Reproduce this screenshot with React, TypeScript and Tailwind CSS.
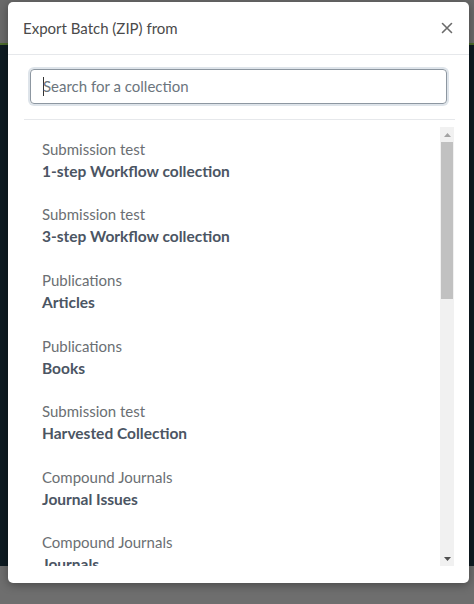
import React from 'react';

const collections = [
  { parent: 'Submission test', name: '1-step Workflow collection' },
  { parent: 'Submission test', name: '3-step Workflow collection' },
  { parent: 'Publications', name: 'Articles' },
  { parent: 'Publications', name: 'Books' },
  { parent: 'Submission test', name: 'Harvested Collection' },
  { parent: 'Compound Journals', name: 'Journal Issues' },
  { parent: 'Compound Journals', name: 'Journals' },
];

const App: React.FC = () => {
  return (
    <div className="relative w-[474px] h-[604px] overflow-hidden font-['Lato','Liberation_Sans',sans-serif]">
      {/* dimmed page behind the dialog */}
      <div className="flex flex-col h-full">
        <div className="h-[43px] bg-[#6a6a6a]" />
        <div className="h-[2px] bg-[#4d6b2c]" />
        <div className="flex-1 bg-[#0e1b22]" />
        <div className="h-[38px] bg-[#6e6e6e]" />
      </div>

      <div className="absolute left-[8px] top-[2px] w-[461px] h-[581px] bg-white rounded-[5px] shadow-[0_2px_10px_rgba(0,0,0,0.35)] flex flex-col">
        <div className="h-[53px] flex items-center justify-between pl-[15px] pr-[16px] border-b border-[#e6e8eb]">
          <h2 className="text-[15px] text-[#4a4a4a]">Export Batch (ZIP) from</h2>
          <button className="text-[#6b6b6b]">
            <svg width="12" height="12" viewBox="0 0 12 12" stroke="currentColor" strokeWidth="1.6" strokeLinecap="round">
              <path d="M1.5 1.5l9 9M10.5 1.5l-9 9" />
            </svg>
          </button>
        </div>

        <div className="flex-1 flex flex-col pl-[16px] pr-[14px] pt-[14px] pb-[17px] min-h-0">
          <div className="pl-[6px] pr-[8px]">
            <div className="h-[35px] rounded-[4px] border border-[#8d97a1] shadow-[0_0_0_2px_rgba(200,210,220,0.6)] flex items-center pl-[12px]">
              <span className="w-px h-[19px] bg-[#333] -mr-px" />
              <span className="text-[15px] text-[#6c757d]">Search for a collection</span>
            </div>
          </div>

          <div className="mt-[15px] border-t border-[#e6e8eb]" />

          <div className="mt-[7px] flex-1 flex min-h-0">
            <div className="flex-1 overflow-hidden">
              {collections.map((c) => (
                <div key={c.name} className="pl-[18px] py-[10.8px] text-[15px] leading-[22px]">
                  <div className="text-[#6b6f73]">{c.parent}</div>
                  <div className="font-bold text-[15.5px] text-[#4b5563]">{c.name}</div>
                </div>
              ))}
            </div>
            <div className="w-[14px] mr-[1px] bg-[#f1f1f1] flex flex-col">
              <div className="h-[15px] flex items-center justify-center">
                <svg width="7" height="4" viewBox="0 0 7 4"><path d="M0 4L3.5 0 7 4z" fill="#a3a3a3" /></svg>
              </div>
              <div className="h-[157px] mx-[1px] bg-[#c1c1c1]" />
              <div className="flex-1" />
              <div className="h-[15px] flex items-center justify-center">
                <svg width="7" height="4" viewBox="0 0 7 4"><path d="M0 0L3.5 4 7 0z" fill="#505050" /></svg>
              </div>
            </div>
          </div>
        </div>
      </div>
    </div>
  );
};

export default App;
